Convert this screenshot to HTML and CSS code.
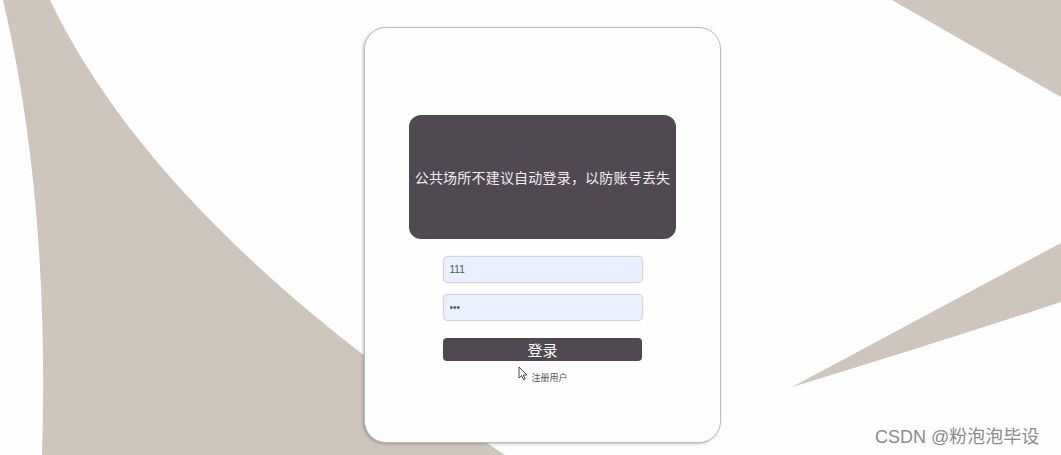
FILE: index.html
```html
<!DOCTYPE html>
<html lang="zh-CN">
<head>
  <meta charset="UTF-8" />
  <meta name="viewport" content="width=device-width, initial-scale=1.0"/>
  <title>登录</title>
  <link rel="stylesheet" href="styles.css">
</head>
<body>
  <!-- background shapes -->
  <svg class="bg" width="1061" height="455" viewBox="0 0 1061 455">
    <path d="M3,0 L50,0 Q160,230 505,455 L42,455 Q50,200 3,0 Z" fill="#cec6bd"/>
    <path d="M892,0 L1061,0 L1061,97 Z" fill="#cec6bd"/>
    <path d="M792,387 L1061,243 L1061,302 Q930,345 792,387 Z" fill="#cec6bd"/>
  </svg>

  <main class="card">
    <div class="notice">公共场所不建议自动登录，以防账号丢失</div>
    <form class="login" onsubmit="return false">
      <input class="field" name="username" value="111">
      <input class="field" type="password" name="password" value="111">
      <button class="submit" type="submit">登录</button>
      <a class="register" href="#">注册用户</a>
    </form>
  </main>

  <!-- mouse pointer -->
  <svg class="pointer" width="10" height="15" viewBox="0 0 10 15">
    <path d="M1,1 L1,12 L3.6,9.6 L5.6,13.8 L7.2,13 L5.3,9 L8.8,9 Z" fill="#fff" stroke="#333" stroke-width="0.9" stroke-linejoin="round"/>
  </svg>

  <div class="watermark">CSDN @粉泡泡毕设</div>
</body>
</html>
```

FILE: styles.css
```css
body { margin: 0; height: 455px; overflow: hidden; background: #fefefe; font-family: "Noto Sans CJK SC", "Noto Sans", sans-serif; position: relative; }
.bg { position: absolute; left: 0; top: 0; z-index: 0; }

.card { position: relative; z-index: 1; box-sizing: border-box; width: 357px; height: 416px; margin: 27px 0 0 364px; padding-top: 87px; background: #fefefe; border: 1.5px solid #bcbcbc; border-radius: 22px; box-shadow: -1px 1px 3px rgba(0,0,0,0.25); display: flex; flex-direction: column; align-items: center; }

.notice { width: 267px; height: 124px; border-radius: 12px; background: #514952; color: #f2eff2; font-size: 14px; letter-spacing: 0.2px; display: flex; align-items: center; justify-content: center; white-space: nowrap; }

.login { width: 200px; margin-top: 17px; display: flex; flex-direction: column; align-items: center; }
.field { box-sizing: border-box; width: 200px; height: 27px; margin: 0; padding: 0 6px; border: 1px solid #dccfd6; border-radius: 5px; background: #e8f0fe; box-shadow: 0 0 2px rgba(0,0,0,0.12); font-family: "Liberation Sans", sans-serif; font-size: 10px; color: #555; outline: none; }
.field + .field { margin-top: 11px; }
.submit { width: 199px; height: 23px; margin-top: 17px; padding: 0; border: none; border-radius: 4px; background: #514952; color: #fff; font-family: "Noto Sans CJK SC", sans-serif; font-size: 15px; line-height: 23px; }
.register { margin: 10px 0 0 14px; font-size: 9px; color: #555; text-decoration: none; }

.pointer { position: absolute; left: 518px; top: 366px; z-index: 2; }
.watermark { position: absolute; left: 875px; top: 425px; z-index: 2; font-family: "Liberation Sans", "Noto Sans CJK SC", sans-serif; font-size: 18px; line-height: 24px; color: #8c8c8c; white-space: nowrap; text-shadow: 0 0 2px #fff; }
```
